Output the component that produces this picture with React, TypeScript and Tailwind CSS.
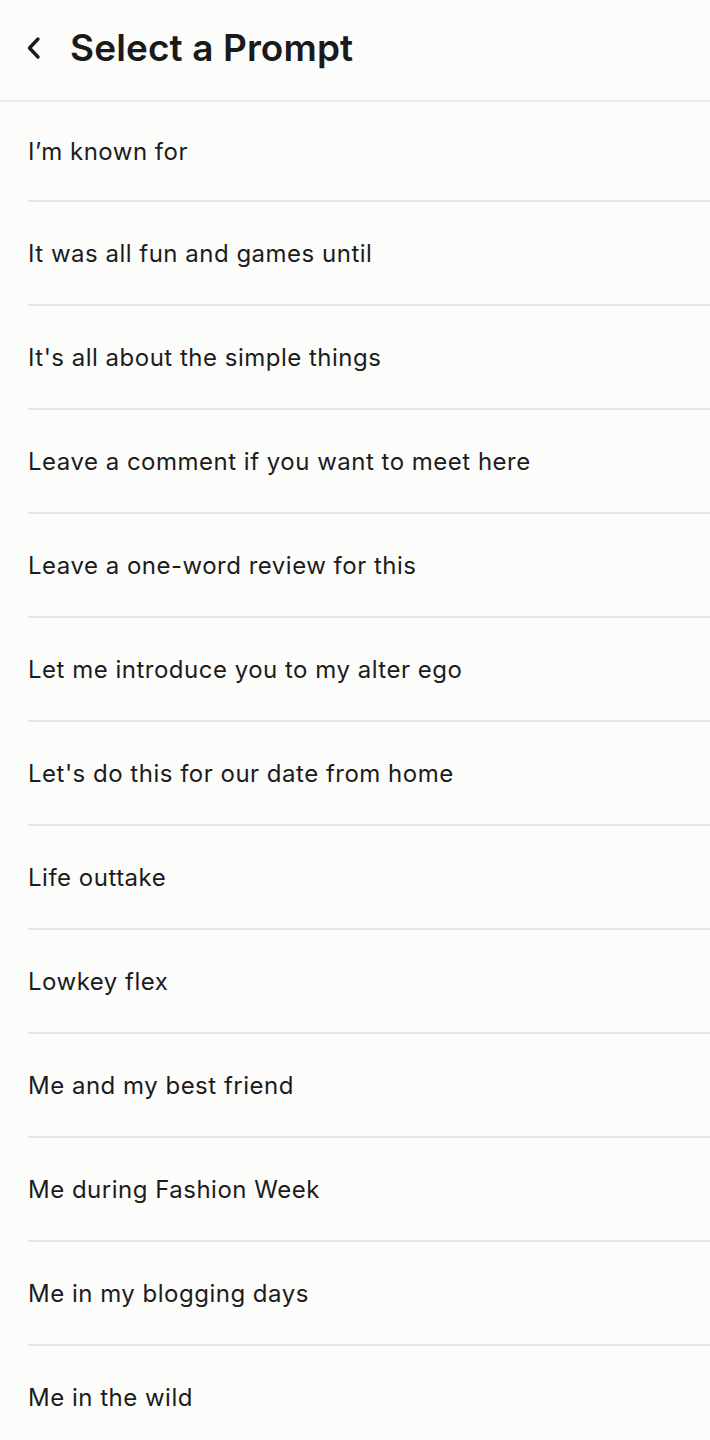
import React from 'react';

const PROMPTS = [
  'I’m known for',
  'It was all fun and games until',
  "It's all about the simple things",
  'Leave a comment if you want to meet here',
  'Leave a one-word review for this',
  'Let me introduce you to my alter ego',
  "Let's do this for our date from home",
  'Life outtake',
  'Lowkey flex',
  'Me and my best friend',
  'Me during Fashion Week',
  'Me in my blogging days',
  'Me in the wild',
];

const BackChevron = () => (
  <svg width="18" height="24" viewBox="0 0 18 24" fill="none" aria-hidden>
    <path
      d="M13 3 L4.5 12 L13 21"
      stroke="#1a1a1a"
      strokeWidth="3.4"
      strokeLinecap="round"
      strokeLinejoin="round"
    />
  </svg>
);

export default function App() {
  return (
    <div
      className="min-h-[1440px] w-full bg-[#fcfcfb] text-[#1c1c1c] overflow-hidden"
      style={{ fontFamily: 'Inter, "Noto Sans", sans-serif' }}
    >
      <header className="flex h-[102px] items-center border-b-2 border-[#ececeb] bg-[#fcfcfb] pb-[4px]">
        <button className="ml-[25px] flex h-[24px] w-[20px] items-center" aria-label="Back">
          <BackChevron />
        </button>
        <h1 className="ml-[25px] text-[37px] font-semibold tracking-[0.1px] text-[#1a1a1a]">
          Select a Prompt
        </h1>
      </header>

      <ul>
        {PROMPTS.map((prompt, i) => (
          <li
            key={prompt}
            className={`flex items-center pl-[28px] ${i === 0 ? 'h-[98px]' : 'h-[102px]'}`}
          >
            <span className="pt-[2px] text-[24px] leading-none tracking-[0.5px] text-[#1c1c1c]">
              {prompt}
            </span>
          </li>
        )).flatMap((row, i) =>
          i < PROMPTS.length - 1
            ? [row, <li key={`d-${i}`} className="ml-[28px] h-[2px] bg-[#e4e4e3]" aria-hidden />]
            : [row]
        )}
      </ul>
    </div>
  );
}
